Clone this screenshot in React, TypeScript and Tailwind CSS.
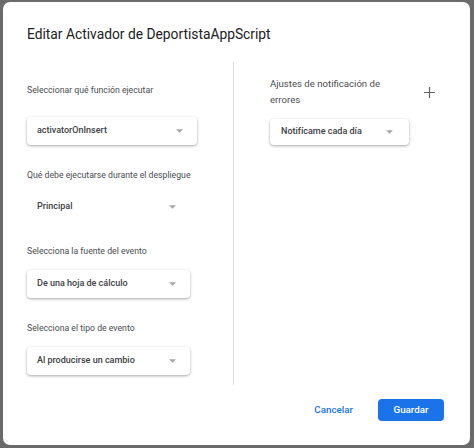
const Arrow = () => (
  <svg width="7" height="4" viewBox="0 0 8 4" className="shrink-0">
    <path d="M0 0h8L4 4z" fill="#a7a7a7" />
  </svg>
)

type SelectProps = {
  value: string
  width: string
  flat?: boolean
}

const Select = ({ value, width, flat }: SelectProps) => (
  <div
    className={`${width} h-[28px] flex items-center justify-between pl-[10px] pr-[14px] rounded-[4px] bg-white ${
      flat ? "" : "shadow-[0_1px_3px_rgba(0,0,0,0.35)]"
    }`}
  >
    <span className="text-[9px] font-medium text-[#3c4043]">{value}</span>
    <Arrow />
  </div>
)

const Label = ({ children, className = "" }: { children: string; className?: string }) => (
  <div className={`leading-[16px] text-[#4a4d51] ${className}`}>{children}</div>
)

export default function App() {
  return (
    <div className="w-[474px] h-[448px] bg-[#6a6a6a] pt-[2px] pl-[3px] font-['Roboto',sans-serif]">
      <div className="w-[467px] h-[443px] bg-white rounded-[7px] flex flex-col">
        <h1 className="pt-[22px] pl-[24px] text-[13.8px] leading-[20px] text-[#202124]">
          Editar Activador de DeportistaAppScript
        </h1>

        <div className="mt-[18px] flex pl-[24px]">
          <div className="w-[206px] pb-[10px]">
            <Label className="mt-[20px] text-[8.7px]">Seleccionar qué función ejecutar</Label>
            <div className="mt-[19px]">
              <Select value="activatorOnInsert" width="w-[170px]" />
            </div>

            <Label className="mt-[22px] text-[8.7px]">Qué debe ejecutarse durante el despliegue</Label>
            <div className="mt-[10px]">
              <Select value="Principal" width="w-[163px]" flat />
            </div>

            <Label className="mt-[22px] text-[8.7px]">Selecciona la fuente del evento</Label>
            <div className="mt-[11px]">
              <Select value="De una hoja de cálculo" width="w-[163px]" />
            </div>

            <Label className="mt-[22px] text-[8.7px]">Selecciona el tipo de evento</Label>
            <div className="mt-[11px]">
              <Select value="Al producirse un cambio" width="w-[163px]" />
            </div>
          </div>

          <div className="w-px bg-[#dadce0]" />

          <div className="flex-1 pl-[36px] pr-[35px]">
            <div className="mt-[14px] flex items-center justify-between">
              <Label className="w-[125px] text-[9.6px]">Ajustes de notificación de errores</Label>
              <svg width="11" height="11" viewBox="0 0 11 11">
                <path d="M5.5 0v11M0 5.5h11" stroke="#5f6368" strokeWidth="1.2" />
              </svg>
            </div>
            <div className="mt-[11px]">
              <div className="w-[139px] h-[26px] flex items-center justify-between pl-[11px] pr-[16px] rounded-[4px] bg-white shadow-[0_1px_3px_rgba(0,0,0,0.35)]">
                <span className="text-[9px] font-medium text-[#3c4043]">Notifícame cada día</span>
                <Arrow />
              </div>
            </div>
          </div>
        </div>

        <div className="mt-[14px] flex items-center justify-end pr-[26px]">
          <button className="text-[9.8px] font-medium text-[#1a73e8] mr-[25px]">Cancelar</button>
          <button className="w-[66px] h-[22px] rounded-[4px] bg-[#1a73e8] text-white text-[9.8px] font-medium">
            Guardar
          </button>
        </div>
      </div>
    </div>
  )
}
